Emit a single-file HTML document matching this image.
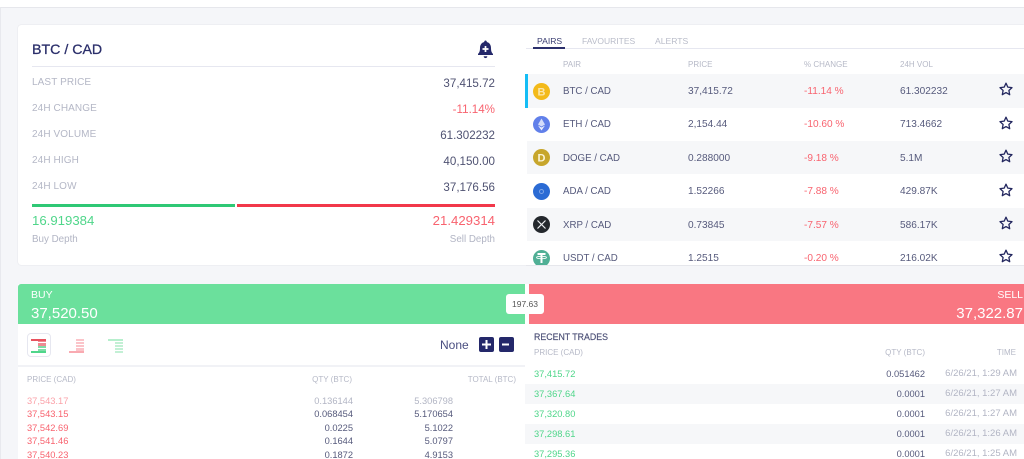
<!DOCTYPE html>
<html><head><meta charset="utf-8"><style>
html{background:#fff}
html,body{margin:0;padding:0;width:1024px;height:459px;overflow:hidden}
body{position:relative;background:#fff;font-family:"Liberation Sans",sans-serif;color:#4a4e75;filter:blur(.3px)}
.a,.t,.r{position:absolute}
.t,.r{white-space:nowrap;line-height:14px;height:14px}
.r{text-align:right}
.l{font-size:10px;color:#b4b7c6;letter-spacing:.1px}
.v{font-size:11.600px;color:#4f5272}
.h{font-size:8px;color:#b6b9c7}
.c{font-size:10.100px;color:#565a7c}
.n{font-size:9.700px;color:#565a7c}
.o{font-size:9.300px;color:#565a7c}
.g{color:#b2b5c4}
.red{color:#f8636f}.grn{color:#4fd68a}
svg{position:absolute;display:block}
</style></head><body>
<div class="a" style="left:0;top:7px;width:1024px;height:452px;background:#f5f6f9;border-top:1px solid #e6e7ec;border-left:1px solid #e8e9ee;box-sizing:border-box"></div>
<div class="a" style="left:18px;top:25px;width:1006px;height:240px;background:#fff;border-radius:3px 0 0 3px;box-shadow:0 0 1px #c8cad4"></div>
<div class="a" style="left:18px;top:284px;width:1006px;height:175px;background:#fff"></div>

<div class="t" style="left:32px;top:43px;font-size:14.200px;color:#2b2f6b;-webkit-text-stroke:.3px #2b2f6b">BTC / CAD</div>
<svg style="left:477px;top:40px" width="17" height="19" viewBox="0 0 17 19"><path d="M8.500.5a1.300 1.300 0 0 1 1.300 1.500C12.500 2.700 14 5 14 8c0 3 .6 4.500 2 6v1H1v-1c1.400-1.500 2-3 2-6 0-3 1.500-5.300 4.200-6A1.300 1.300 0 0 1 8.500.5z" fill="#24286a"/><path d="M6.700 16.300h3.600a1.800 1.800 0 0 1-3.600 0z" fill="#24286a"/><path d="M8.500 6v6M5.500 9h6" stroke="#fff" stroke-width="1.700"/></svg>
<div class="a" style="left:32px;top:66px;width:463px;height:1px;background:#e6e7f0"></div>

<div class="t l" style="left:32px;top:76px">LAST PRICE</div>
<div class="t l" style="left:32px;top:102px">24H CHANGE</div>
<div class="t l" style="left:32px;top:128px">24H VOLUME</div>
<div class="t l" style="left:32px;top:154px">24H HIGH</div>
<div class="t l" style="left:32px;top:180px">24H LOW</div>
<div class="r v" style="right:529px;top:77px">37,415.72</div>
<div class="r v red" style="right:529px;top:103px">-11.14%</div>
<div class="r v" style="right:529px;top:129px">61.302232</div>
<div class="r v" style="right:529px;top:155px">40,150.00</div>
<div class="r v" style="right:529px;top:181px">37,176.56</div>
<div class="a" style="left:32px;top:204px;width:203px;height:3px;background:#2fc875"></div>
<div class="a" style="left:237px;top:204px;width:258px;height:3px;background:#f2384a"></div>
<div class="t grn" style="left:32px;top:214px;font-size:13.200px">16.919384</div>
<div class="r red" style="right:529px;top:214px;font-size:13.200px">21.429314</div>
<div class="t" style="left:32px;top:233px;font-size:9.800px;color:#b2b5c4">Buy Depth</div>
<div class="r" style="right:529px;top:233px;font-size:9.800px;color:#b2b5c4">Sell Depth</div>

<div class="t" style="left:537px;top:34px;font-size:8.600px;color:#3a3e72">PAIRS</div>
<div class="t" style="left:582px;top:34px;font-size:8.500px;color:#b9bcc9">FAVOURITES</div>
<div class="t" style="left:655px;top:34px;font-size:8.600px;color:#b9bcc9">ALERTS</div>
<div class="a" style="left:526px;top:48px;width:498px;height:1px;background:#e6e7f0"></div>
<div class="a" style="left:533px;top:47px;width:32px;height:2px;background:#2b2f6b"></div>
<div class="t h" style="left:563px;top:58px">PAIR</div>
<div class="t h" style="left:688px;top:58px">PRICE</div>
<div class="t h" style="left:804px;top:58px">% CHANGE</div>
<div class="t h" style="left:900px;top:58px">24H VOL</div>

<div class="a" style="left:527px;top:74px;width:497px;height:34px;background:#f6f7f9"></div>
<div class="a" style="left:525px;top:74px;width:3px;height:34px;background:#15bdf5"></div>
<div class="a" style="left:527px;top:141px;width:497px;height:33px;background:#f6f7f9"></div>
<div class="a" style="left:527px;top:208px;width:497px;height:33px;background:#f6f7f9"></div>

<svg style="left:533px;top:83px" width="17" height="17" viewBox="0 0 17 17"><circle cx="8.500" cy="8.500" r="8.500" fill="#f3ba1a"/><text x="8.500" y="12.500" font-size="11" font-weight="700" text-anchor="middle" fill="#fbe6a8" font-family="Liberation Sans">B</text></svg>
<svg style="left:533px;top:116px" width="17" height="17" viewBox="0 0 17 17"><circle cx="8.500" cy="8.500" r="8.500" fill="#6180ea"/><path d="M8.500 2.500l3.500 6-3.500 2-3.500-2z" fill="#d5ddfa"/><path d="M8.500 11.500l3.500-2-3.500 5-3.500-5z" fill="#eef1fd"/></svg>
<svg style="left:533px;top:149px" width="17" height="17" viewBox="0 0 17 17"><circle cx="8.500" cy="8.500" r="8.500" fill="#c7a62c"/><text x="8.500" y="12.500" font-size="11" font-weight="700" text-anchor="middle" fill="#fbf4d8" font-family="Liberation Sans">D</text></svg>
<svg style="left:533px;top:183px" width="17" height="17" viewBox="0 0 17 17"><circle cx="8.500" cy="8.500" r="8.500" fill="#2b6bd4"/><circle cx="8.500" cy="8.500" r="2" fill="none" stroke="#7fa5e6" stroke-width="1"/></svg>
<svg style="left:533px;top:216px" width="17" height="17" viewBox="0 0 17 17"><circle cx="8.500" cy="8.500" r="8.500" fill="#24282d"/><path d="M4.500 4.500l4 4 4-4M4.500 12.500l4-4 4 4" fill="none" stroke="#eceef0" stroke-width="1.200"/></svg>
<svg style="left:533px;top:250px" width="17" height="15" viewBox="0 0 17 15"><circle cx="8.500" cy="8.500" r="8.500" fill="#50af95"/><path d="M4.500 4h8M8.500 4v9" stroke="#fff" stroke-width="2"/><ellipse cx="8.500" cy="7.500" rx="5" ry="1.200" fill="none" stroke="#fff" stroke-width=".8"/></svg>

<div class="t n" style="left:563px;top:85px">BTC / CAD</div><div class="t c" style="left:688px;top:85px">37,415.72</div><div class="t c red" style="left:804px;top:85px">-11.14 %</div><div class="t c" style="left:900px;top:85px">61.302232</div>
<div class="t n" style="left:563px;top:118px">ETH / CAD</div><div class="t c" style="left:688px;top:118px">2,154.44</div><div class="t c red" style="left:804px;top:118px">-10.60 %</div><div class="t c" style="left:900px;top:118px">713.4662</div>
<div class="t n" style="left:563px;top:152px">DOGE / CAD</div><div class="t c" style="left:688px;top:152px">0.288000</div><div class="t c red" style="left:804px;top:152px">-9.18 %</div><div class="t c" style="left:900px;top:152px">5.1M</div>
<div class="t n" style="left:563px;top:185px">ADA / CAD</div><div class="t c" style="left:688px;top:185px">1.52266</div><div class="t c red" style="left:804px;top:185px">-7.88 %</div><div class="t c" style="left:900px;top:185px">429.87K</div>
<div class="t n" style="left:563px;top:219px">XRP / CAD</div><div class="t c" style="left:688px;top:219px">0.73845</div><div class="t c red" style="left:804px;top:219px">-7.57 %</div><div class="t c" style="left:900px;top:219px">586.17K</div>
<div class="t n" style="left:563px;top:252px">USDT / CAD</div><div class="t c" style="left:688px;top:252px">1.2515</div><div class="t c red" style="left:804px;top:252px">-0.20 %</div><div class="t c" style="left:900px;top:252px">216.02K</div>

<svg width="0" height="0" style="left:0;top:0"><defs><path id="s" d="M7 1.200l1.800 3.900 4.200.5-3.100 2.900.8 4.200L7 10.600l-3.700 2.100.8-4.200L1 5.600l4.200-.5z" fill="none" stroke="#23275f" stroke-width="1.300" stroke-linejoin="round"/></defs></svg>
<svg style="left:999px;top:82px" width="14" height="14"><use href="#s"/></svg>
<svg style="left:999px;top:116px" width="14" height="14"><use href="#s"/></svg>
<svg style="left:999px;top:149px" width="14" height="14"><use href="#s"/></svg>
<svg style="left:999px;top:183px" width="14" height="14"><use href="#s"/></svg>
<svg style="left:999px;top:216px" width="14" height="14"><use href="#s"/></svg>
<svg style="left:999px;top:249px" width="14" height="14"><use href="#s"/></svg>
<div class="a" style="left:526px;top:265px;width:498px;height:1px;background:#e6e7ec"></div>

<div class="a" style="left:18px;top:284px;width:507px;height:40px;background:#6be09c;border-radius:3px 0 0 0"></div>
<div class="a" style="left:529px;top:284px;width:495px;height:40px;background:#f97782"></div>
<div class="t" style="left:31px;top:288px;font-size:10.500px;color:#fff">BUY</div>
<div class="t" style="left:31px;top:307px;font-size:15px;color:#fff">37,520.50</div>
<div class="r" style="right:1px;top:288px;font-size:10.500px;color:#fff">SELL</div>
<div class="r" style="right:1px;top:307px;font-size:15px;color:#fff">37,322.87</div>
<div class="a" style="left:506px;top:294px;width:38px;height:20px;background:#fff;border-radius:3px;font-size:8.500px;line-height:20px;text-align:center;color:#555">197.63</div>

<div class="a" style="left:27px;top:333px;width:24px;height:24px;border:1px solid #e6e7f0;border-radius:4px;box-sizing:border-box"></div>
<svg style="left:31px;top:339px" width="16" height="14"><rect x="0" y="0" width="15" height="2" fill="#e9525f"/><rect x="7" y="2" width="8" height="1" fill="#ee8b93"/><rect x="7" y="4" width="8" height="3" fill="#ee8b93"/><rect x="7" y="7" width="8" height="2" fill="#7fdca6"/><rect x="7" y="10" width="8" height="2" fill="#7fdca6"/><rect x="0" y="12" width="15" height="2" fill="#4fd68a"/></svg>
<svg style="left:69px;top:339px" width="16" height="14"><rect x="7" y="0" width="8" height="2" fill="#fbc4c9"/><rect x="7" y="3" width="8" height="2" fill="#fbc4c9"/><rect x="7" y="6" width="8" height="2" fill="#fbc4c9"/><rect x="7" y="9" width="8" height="3" fill="#fbc4c9"/><rect x="0" y="12" width="15" height="2" fill="#f9aab1"/></svg>
<svg style="left:108px;top:339px" width="16" height="14"><rect x="0" y="0" width="15" height="2" fill="#b6efcd"/><rect x="7" y="3" width="8" height="2" fill="#c3f0d5"/><rect x="7" y="6" width="8" height="2" fill="#c3f0d5"/><rect x="7" y="9" width="8" height="2" fill="#c3f0d5"/><rect x="7" y="12" width="8" height="2" fill="#c3f0d5"/></svg>
<div class="t" style="left:440px;top:338px;font-size:12px;color:#4a4e80">None</div>
<div class="a" style="left:479px;top:337px;width:15px;height:15px;background:#24286a;border-radius:2px"></div>
<div class="a" style="left:499px;top:337px;width:15px;height:15px;background:#24286a;border-radius:2px"></div>
<svg style="left:479px;top:337px" width="35" height="15"><path d="M3 7.500h9M7.500 3v9M23 7.500h7" stroke="#fff" stroke-width="2"/></svg>
<div class="a" style="left:18px;top:365px;width:507px;height:2px;background:#f1f2f6"></div>

<div class="t h" style="left:27px;top:373px">PRICE (CAD)</div>
<div class="r h" style="right:672px;top:373px">QTY (BTC)</div>
<div class="r h" style="right:508px;top:373px">TOTAL (BTC)</div>
<div class="t o red" style="left:27px;top:394px;opacity:.6">37,543.17</div><div class="r o g" style="right:671px;top:394px">0.136144</div><div class="r o g" style="right:571px;top:394px">5.306798</div>
<div class="t o red" style="left:27px;top:407px">37,543.15</div><div class="r o" style="right:671px;top:407px">0.068454</div><div class="r o" style="right:571px;top:407px">5.170654</div>
<div class="t o red" style="left:27px;top:421px">37,542.69</div><div class="r o" style="right:671px;top:421px">0.0225</div><div class="r o" style="right:571px;top:421px">5.1022</div>
<div class="t o red" style="left:27px;top:434px">37,541.46</div><div class="r o" style="right:671px;top:434px">0.1644</div><div class="r o" style="right:571px;top:434px">5.0797</div>
<div class="t o red" style="left:27px;top:448px">37,540.23</div><div class="r o" style="right:671px;top:448px">0.1872</div><div class="r o" style="right:571px;top:448px">4.9153</div>

<div class="a" style="left:525px;top:384px;width:499px;height:20px;background:#f6f7f9"></div>
<div class="a" style="left:525px;top:424px;width:499px;height:20px;background:#f6f7f9"></div>
<div class="t" style="left:534px;top:330px;font-size:8.800px;color:#4a4e75;-webkit-text-stroke:.15px #4a4e75">RECENT TRADES</div>
<div class="t h" style="left:534px;top:346px">PRICE (CAD)</div>
<div class="r h" style="right:99px;top:346px">QTY (BTC)</div>
<div class="r h" style="right:8px;top:346px">TIME</div>
<div class="t o grn" style="left:534px;top:367px">37,415.72</div><div class="r o" style="right:99px;top:367px">0.051462</div><div class="r o g" style="right:7px;top:367px;font-size:9.500px">6/26/21, 1:29 AM</div>
<div class="t o grn" style="left:534px;top:387px">37,367.64</div><div class="r o" style="right:99px;top:387px">0.0001</div><div class="r o g" style="right:7px;top:387px;font-size:9.500px">6/26/21, 1:27 AM</div>
<div class="t o grn" style="left:534px;top:407px">37,320.80</div><div class="r o" style="right:99px;top:407px">0.0001</div><div class="r o g" style="right:7px;top:407px;font-size:9.500px">6/26/21, 1:27 AM</div>
<div class="t o grn" style="left:534px;top:427px">37,298.61</div><div class="r o" style="right:99px;top:427px">0.0001</div><div class="r o g" style="right:7px;top:427px;font-size:9.500px">6/26/21, 1:26 AM</div>
<div class="t o grn" style="left:534px;top:447px">37,295.36</div><div class="r o" style="right:99px;top:447px">0.0001</div><div class="r o g" style="right:7px;top:447px;font-size:9.500px">6/26/21, 1:25 AM</div>
</body></html>
